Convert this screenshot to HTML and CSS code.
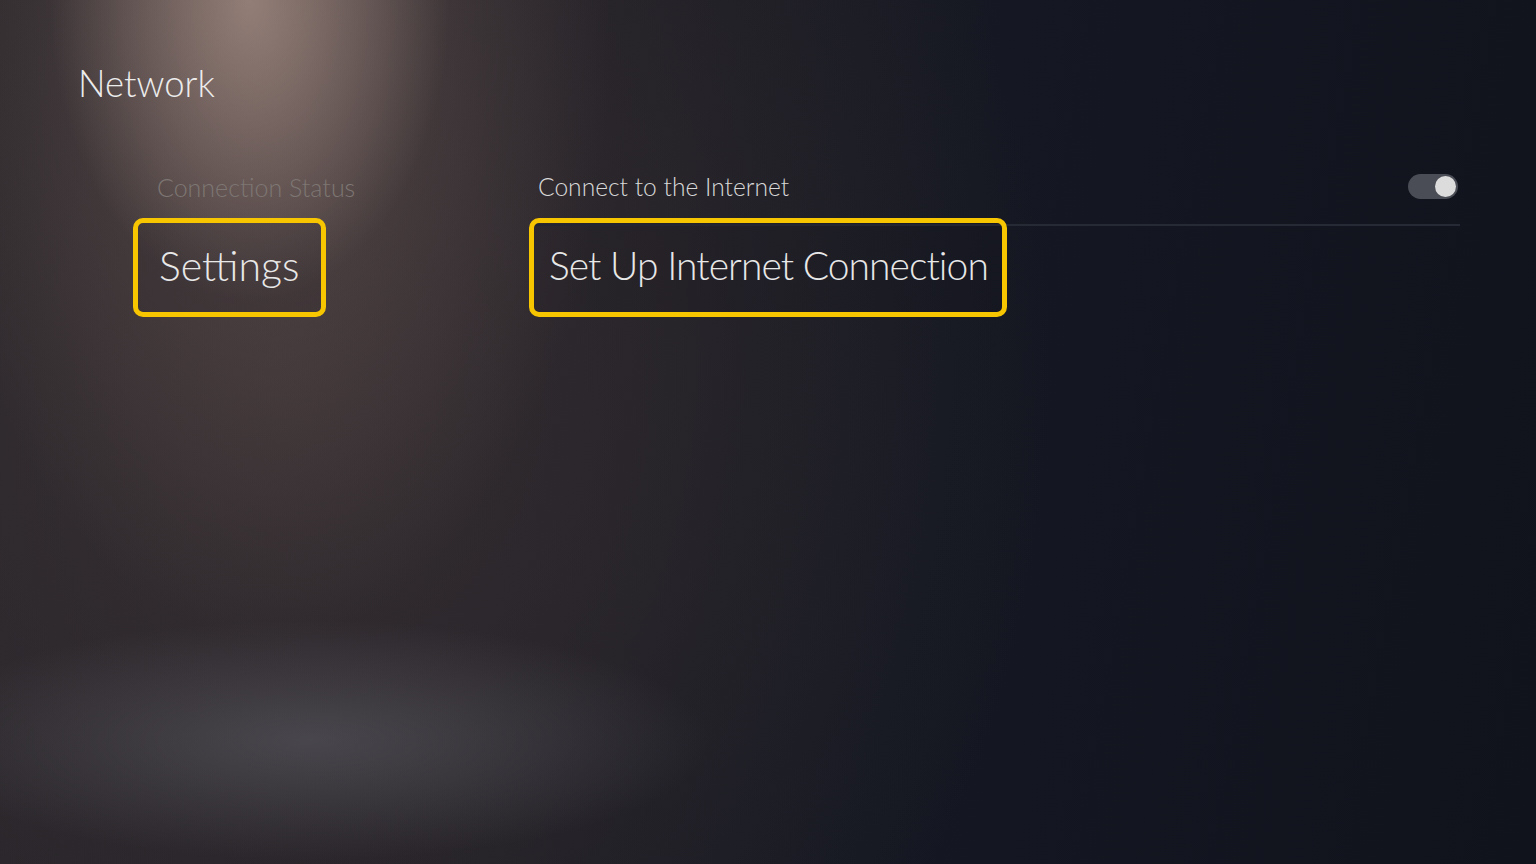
FILE: index.html
```html
<!DOCTYPE html>
<html lang="en">
<head>
    <meta charset="UTF-8">
    <meta name="viewport" content="width=device-width, initial-scale=1.0">
    <title>Network</title>
    <link rel="stylesheet" href="styles.css">
</head>
<body>
    <div class="page">
        <h1 class="page-title">Network</h1>

        <div class="columns">
            <!-- Left menu -->
            <ul class="menu">
                <li class="menu-item">Connection Status</li>
                <li class="menu-item focused">Settings</li>
            </ul>

            <!-- Right panel -->
            <ul class="panel">
                <li class="panel-row">
                    <span>Connect to the Internet</span>
                    <span class="toggle on"><span class="knob"></span></span>
                </li>
                <li class="panel-row focused">Set Up Internet Connection</li>
            </ul>
        </div>
    </div>
</body>
</html>
```

FILE: styles.css
```css
html, body {
    height: 100%;
}

body {
    margin: 0;
    font-family: Lato, "Open Sans", sans-serif;
    font-weight: 300;
    color: #e6e6e6;
    overflow: hidden;
    background:
        radial-gradient(ellipse 200px 300px at 250px 0, rgba(175, 150, 140, 0.7), rgba(175, 150, 140, 0) 100%),
        radial-gradient(ellipse 340px 600px at 270px 40px, rgba(120, 100, 95, 0.5), rgba(120, 100, 95, 0) 100%),
        radial-gradient(ellipse 400px 120px at 310px 740px, rgba(95, 95, 103, 0.55), rgba(95, 95, 103, 0) 100%),
        radial-gradient(ellipse 760px 900px at 290px 380px, rgba(62, 52, 54, 0.7), rgba(62, 52, 54, 0) 100%),
        linear-gradient(100deg, #27252a 0%, #1f1e25 35%, #151822 60%, #10131c 100%);
}

.page {
    padding: 61px 76px 0 78px;
}

/* Header */
.page-title {
    margin: 0;
    font-size: 36.5px;
    font-weight: 300;
    line-height: 44px;
    color: #ececec;
}

.columns {
    display: flex;
    margin-top: 43px;
}

ul {
    list-style: none;
    margin: 0;
    padding: 0;
}

/* Left menu */
.menu {
    width: 396px;
    margin-left: 55px;
    flex-shrink: 0;
}

.menu-item {
    height: 78px;
    display: flex;
    align-items: center;
    padding: 0 20px;
    border: 4px solid transparent;
    box-sizing: border-box;
    font-size: 25px;
    color: #7d7673;
    white-space: nowrap;
}

/* Right panel */
.panel {
    flex: 1;
}

.panel-row {
    height: 78px;
    display: flex;
    align-items: center;
    justify-content: space-between;
    padding: 0 2px 0 9px;
    border-bottom: 2px solid #262a35;
    box-sizing: border-box;
    font-size: 24.6px;
    color: #d8d8d8;
    white-space: nowrap;
}

/* Focused items */
.menu-item.focused,
.panel-row.focused {
    margin-top: -8px;
    height: 99px;
    border: 5px solid #f8c600;
    border-radius: 10px;
    color: #e8e8e8;
    background: rgba(20, 18, 22, 0.12);
    padding-bottom: 5px;
}

.menu-item.focused {
    width: 193px;
    padding-left: 21px;
    padding-right: 20px;
    font-size: 41px;
}

.panel-row.focused {
    width: 478px;
    padding-left: 15px;
    padding-right: 0;
    justify-content: flex-start;
    font-size: 39px;
    letter-spacing: -0.95px;
}

/* Toggle switch */
.toggle {
    width: 50px;
    height: 25px;
    border-radius: 13px;
    background: #4b4d56;
    display: flex;
    align-items: center;
    justify-content: flex-end;
    padding: 0 2px;
    box-sizing: border-box;
}

.toggle .knob {
    width: 21px;
    height: 21px;
    border-radius: 50%;
    background: #dcdcdc;
}
```
